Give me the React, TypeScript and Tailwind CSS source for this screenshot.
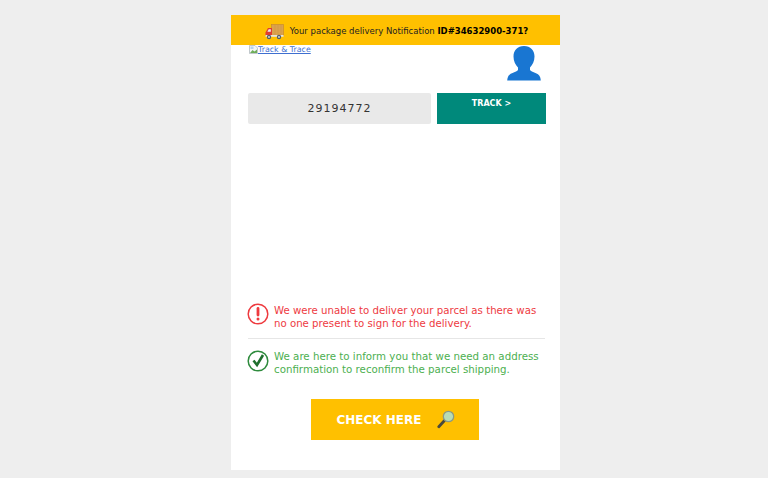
import React from 'react';

const font = { fontFamily: '"DejaVu Sans", Verdana, sans-serif' };

const TruckIcon = () => (
  <svg width="19" height="16" viewBox="0 0 19 16" className="shrink-0">
    <rect x="6.500" y="0.500" width="12" height="11" fill="#dca24c" stroke="#b97f35" strokeWidth="0.500" />
    <path d="M10 1v10M13 1v10M16 1v10" stroke="#c89244" strokeWidth="0.500" />
    <path d="M0.500 8.500l2.500-4.500h4v8h-6.500z" fill="#e03c31" />
    <path d="M2.400 7.800l1.300-2.600h2.100v2.600z" fill="#e8eef2" />
    <rect x="0.500" y="11" width="18" height="1.800" fill="#e8e4dc" />
    <circle cx="4" cy="13" r="2.200" fill="#55606a" />
    <circle cx="14" cy="13" r="2.200" fill="#55606a" />
    <circle cx="4" cy="13" r="0.900" fill="#d8dde0" />
    <circle cx="14" cy="13" r="0.900" fill="#d8dde0" />
  </svg>
);

const BrokenImage = () => (
  <svg width="9" height="9" viewBox="0 0 9 9" className="shrink-0">
    <path d="M0.500 0.500h5.500l2.500 2.500v5.500h-8z" fill="#f4f6f8" stroke="#a9b1b8" strokeWidth="0.700" />
    <path d="M1 8l2.500-3 2 1.500 2.500-2v3.500z" fill="#6fae5a" />
    <path d="M1.500 1.500h3v2.500h-3z" fill="#b9d3ee" />
  </svg>
);

const UserIcon = () => (
  <svg width="34" height="35" viewBox="0 0 34 35">
    <path
      d="M17 0c6.500 0 10.500 4.500 10.500 10.500 0 4.500-1.900 8.500-4.500 11v2.500c1 1.500 3.800 2.300 6 3.200 3 1.100 4.500 3.200 4.800 7.300H.2c.3-4.100 1.800-6.200 4.800-7.300 2.200-.9 5-1.700 6-3.200v-2.500c-2.600-2.500-4.500-6.500-4.500-11C6.500 4.500 10.500 0 17 0z"
      fill="#1976d2"
    />
  </svg>
);

const AlertIcon = () => (
  <svg width="22" height="22" viewBox="0 0 22 22" className="shrink-0">
    <circle cx="11" cy="11" r="9.800" fill="none" stroke="#ee3a3f" strokeWidth="1.500" />
    <path d="M11 5.500v6.500" stroke="#ee3a3f" strokeWidth="2.800" strokeLinecap="round" />
    <circle cx="11" cy="16" r="1.500" fill="#ee3a3f" />
  </svg>
);

const CheckIcon = () => (
  <svg width="22" height="22" viewBox="0 0 22 22" className="shrink-0">
    <circle cx="11" cy="11" r="9.800" fill="none" stroke="#2e8b3d" strokeWidth="1.500" />
    <path d="M6.500 10.500l3.500 4.500 6-10" fill="none" stroke="#1f6f2e" strokeWidth="2.600" />
  </svg>
);

const MagnifierIcon = () => (
  <svg width="18" height="19" viewBox="0 0 18 19">
    <path d="M7.500 10.500L1.800 16.800" stroke="#4a4a3c" strokeWidth="2.800" strokeLinecap="round" />
    <circle cx="11.500" cy="6.500" r="5.200" fill="#b9dcb4" stroke="#8d9a80" strokeWidth="1.300" />
  </svg>
);

export default function App() {
  return (
    <div className="min-h-[478px] bg-[#eeeeee] pl-[231px] pt-[15px]" style={font}>
      <div className="h-[455px] w-[329px] bg-white">
        {/* Notification bar */}
        <div className="flex h-[30px] items-center justify-center gap-[6px] bg-[#ffc000] pl-[2px] pt-[3px] text-[8.500px] text-[#222]">
          <TruckIcon />
          <span>
            Your package delivery Notification <b className="font-bold text-black">ID#34632900-371?</b>
          </span>
        </div>

        <div className="flex h-[36px] items-start justify-between pl-[18px] pr-[19px]">
          <a href="#" className="flex items-center text-[7.900px] leading-[9px] text-[#3f6fd0] underline">
            <BrokenImage />
            Track &amp; Trace
          </a>
          <div className="pt-[1px]">
            <UserIcon />
          </div>
        </div>

        {/* Tracking row */}
        <div className="mt-[12px] flex h-[31px] gap-[6px] pl-[17px] pr-[14px]">
          <div className="flex w-[183px] items-center justify-center rounded-[2px] bg-[#e9e9e9] pt-[1px] text-[11px] tracking-[1px] text-[#333]">
            29194772
          </div>
          <div className="flex-1 bg-[#00897b] pt-[5px] text-center text-[8px] font-bold leading-[12px] text-white">
            TRACK &gt;
          </div>
        </div>

        {/* Messages */}
        <div className="mt-[180px] flex items-start gap-[5px] pl-[16px] text-[10.200px] leading-[13px] text-[#ee3a3f]">
          <div className="-mt-[1px]">
            <AlertIcon />
          </div>
          <p>
            We were unable to deliver your parcel as there was
            <br />
            no one present to sign for the delivery.
          </p>
        </div>
        <div className="ml-[17px] mt-[8px] h-px w-[297px] bg-[#e6e6e6]" />
        <div className="mt-[11px] flex items-start gap-[5px] pl-[16px] text-[10.250px] leading-[13px] text-[#4caf50]">
          <CheckIcon />
          <p>
            We are here to inform you that we need an address
            <br />
            confirmation to reconfirm the parcel shipping.
          </p>
        </div>

        {/* CTA */}
        <div className="mt-[23px] flex pl-[80px]">
          <div className="flex h-[41px] w-[168px] items-center justify-center gap-[15px] bg-[#ffc000] pl-[1px] text-[12px] font-bold text-white">
            CHECK HERE
            <MagnifierIcon />
          </div>
        </div>
      </div>
    </div>
  );
}
